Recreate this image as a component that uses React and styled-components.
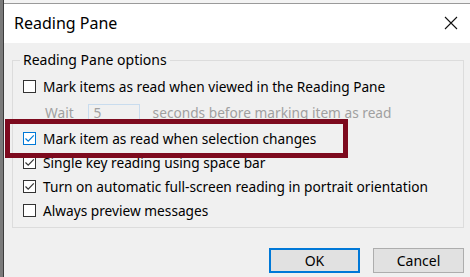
import React from "react";
import styled, { createGlobalStyle } from "styled-components";

const GlobalStyle = createGlobalStyle`
  html, body {
    margin: 0;
    padding: 0;
    width: 470px;
    height: 277px;
    overflow: hidden;
    background: #f0f0f0;
  }
  #root {
    width: 470px;
    height: 277px;
  }
`;

const options = [
  { label: "Mark items as read when viewed in the Reading Pane", checked: false },
  { label: "WAIT" },
  { label: "Mark item as read when selection changes", checked: true, focused: true },
  { label: "Single key reading using space bar", checked: true },
  { label: "Turn on automatic full-screen reading in portrait orientation", checked: true },
  { label: "Always preview messages", checked: false },
];

function CheckBox({ checked, focused }) {
  return (
    <Box $focused={focused}>
      {checked && (
        <svg width="11" height="11" viewBox="0 0 11 11">
          <path
            d="M1.5 5.5 L4.2 8.2 L9.8 2.4"
            fill="none"
            stroke={focused ? "#0078d7" : "#333"}
            strokeWidth="1.2"
          />
        </svg>
      )}
    </Box>
  );
}

export default function App() {
  return (
    <>
      <GlobalStyle />
      <Page>
        <LeftEdge />
        <Column>
          <TopStrip />
          <Dialog>
            <TitleBar>
              <Title>Reading Pane</Title>
              <CloseButton>
                <svg width="14" height="14" viewBox="0 0 14 14">
                  <path d="M1 1 L13 13 M13 1 L1 13" stroke="#111" strokeWidth="1.1" />
                </svg>
              </CloseButton>
            </TitleBar>
            <Body>
              <Group>
                <Legend>Reading Pane options</Legend>
                {options.map((o, i) =>
                  o.label === "WAIT" ? (
                    <WaitRow key={i}>
                      <Dim>Wait</Dim>
                      <NumberBox>5</NumberBox>
                      <Dim>seconds before marking item as read</Dim>
                    </WaitRow>
                  ) : (
                    <Row key={i}>
                      <CheckBox checked={o.checked} focused={o.focused} />
                      <Label>{o.label}</Label>
                    </Row>
                  )
                )}
              </Group>
              <Buttons>
                <Button $primary>OK</Button>
                <Button>Cancel</Button>
              </Buttons>
              <Highlight />
            </Body>
          </Dialog>
        </Column>
      </Page>
    </>
  );
}

const Page = styled.div`
  display: flex;
  width: 470px;
  height: 277px;
  font-family: "Noto Sans", "Open Sans", sans-serif;
  color: #000;
`;

const LeftEdge = styled.div`
  width: 3px;
  background: #7a7a7a;
  border-right: 1px solid #3c3c3c;
`;

const Column = styled.div`
  flex: 1;
  display: flex;
  flex-direction: column;
`;

const TopStrip = styled.div`
  height: 3px;
  background: #f3f3f3;
  border-bottom: 1px solid #9a9a9a;
`;

const Dialog = styled.div`
  flex: 1;
  display: flex;
  flex-direction: column;
  background: #f0f0f0;
`;

const TitleBar = styled.div`
  height: 39px;
  background: #fff;
  display: flex;
  align-items: center;
  justify-content: space-between;
  padding: 0 12px 0 10px;
`;

const Title = styled.div`
  font-size: 16px;
  margin-top: -1px;
`;

const CloseButton = styled.div`
  display: flex;
  align-items: center;
  margin-top: -1px;
`;

const Body = styled.div`
  position: relative;
  flex: 1;
  padding: 7px 6px 0 8px;
`;

const Group = styled.fieldset`
  margin: 0;
  border: 1px solid #dcdcdc;
  padding: 4px 10px 5px 10px;
  display: flex;
  flex-direction: column;
`;

const Legend = styled.legend`
  font-size: 14px;
  line-height: 20px;
  padding: 0 3px;
  margin-left: -3px;
`;

const Row = styled.div`
  height: 24px;
  display: flex;
  align-items: center;
  gap: 7px;
`;

const WaitRow = styled.div`
  height: 28px;
  display: flex;
  align-items: center;
  padding-left: 22px;
`;

const Box = styled.div`
  width: 11px;
  height: 11px;
  border: 1px solid ${(p) => (p.$focused ? "#0078d7" : "#333")};
  background: #fff;
  display: flex;
  align-items: center;
  justify-content: center;
  flex-shrink: 0;
`;

const Label = styled.span`
  font-size: 13.7px;
  white-space: nowrap;
`;

const Dim = styled.span`
  font-size: 13.7px;
  color: #a0a0a0;
  white-space: nowrap;
`;

const NumberBox = styled.div`
  width: 45px;
  height: 15px;
  border: 1px solid #c9dcee;
  margin: 0 13px 0 14px;
  padding-left: 5px;
  font-size: 13.7px;
  line-height: 15px;
  color: #a0a0a0;
`;

const Buttons = styled.div`
  display: flex;
  justify-content: flex-end;
  gap: 13px;
  margin-top: 20px;
`;

const Button = styled.div`
  width: ${(p) => (p.$primary ? "87px" : "89px")};
  height: ${(p) => (p.$primary ? "21px" : "23px")};
  border: ${(p) => (p.$primary ? "2px solid #0078d7" : "1px solid #adadad")};
  background: #e1e1e1;
  display: flex;
  align-items: center;
  justify-content: center;
  font-size: 14px;
`;

const Highlight = styled.div`
  position: absolute;
  left: 1px;
  top: 76px;
  width: 333px;
  height: 29px;
  border: 5px solid #7d0a1e;
  pointer-events: none;
`;
